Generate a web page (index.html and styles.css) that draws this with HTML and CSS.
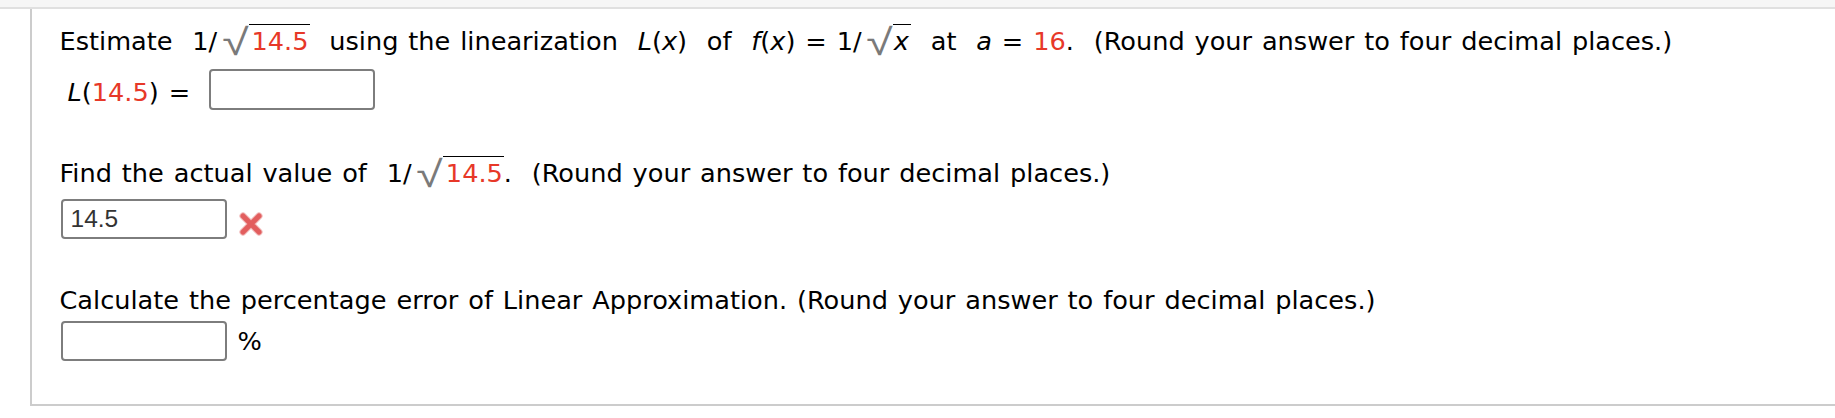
FILE: index.html
```html
<!DOCTYPE html>
<html>
<head>
<meta charset="utf-8">
<link rel="stylesheet" href="styles.css">
</head>
<body>
<div class="topbar"></div>
<div class="panel">
  <div class="part part1">
    <p class="line">Estimate&nbsp; 1/<span class="rad">√</span><span class="radicand red num">14.5</span>&nbsp; using the linearization&nbsp; <i>L</i>(<i>x</i>)&nbsp; of&nbsp; <i>f</i>(<i>x</i>) = 1/<span class="rad">√</span><span class="radicand var"><i>x</i></span>&nbsp; at&nbsp; <i>a</i> = <span class="red">16</span>.&nbsp; (Round your answer to four decimal places.)</p>
    <div class="row row1">
      <span class="label"><i>L</i>(<span class="red">14.5</span>) =</span>
      <input class="ans" type="text">
    </div>
  </div>
  <div class="part part2">
    <p class="line">Find the actual value of&nbsp; 1/<span class="rad">√</span><span class="radicand red num">14.5</span>.&nbsp; (Round your answer to four decimal places.)</p>
    <div class="row row2">
      <input class="ans" type="text" value="14.5">
      <svg class="wrong" width="26" height="26" viewBox="0 0 26 26" aria-label="incorrect">
        <path d="M5 5 L21 21 M21 5 L5 21" stroke="#f0b4b4" stroke-width="7" stroke-linecap="round" fill="none"/>
        <path d="M5 5 L21 21 M21 5 L5 21" stroke="#e25e5e" stroke-width="5" stroke-linecap="round" fill="none"/>
      </svg>
    </div>
  </div>
  <div class="part part3">
    <p class="line plain">Calculate the percentage error of Linear Approximation. (Round your answer to four decimal places.)</p>
    <div class="row row3">
      <input class="ans" type="text">
      <span class="unit">%</span>
    </div>
  </div>
</div>
</body>
</html>
```

FILE: styles.css
```css
html, body {
  margin: 0;
  padding: 0;
  background: #ffffff;
}

body {
  font-family: "DejaVu Sans", Verdana, sans-serif;
  font-size: 25.6px;
  color: #000;
}

.topbar {
  height: 7px;
  background: #f6f6f6;
  border-bottom: 2px solid #e0e0e0;
}

.panel {
  margin-left: 30px;
  height: 397px;
  box-sizing: border-box;
  border-left: 2px solid #cccccc;
  border-bottom: 2px solid #cccccc;
  padding: 15px 0 0 27.5px;
}

.line {
  margin: 0;
  line-height: 32px;
  white-space: nowrap;
  word-spacing: 1.75px;
}

i {
  font-style: oblique;
}

.red {
  color: #e73828;
}

.rad {
  display: inline-block;
  width: 25px;
  text-align: center;
  transform: scaleX(1.3);
  font-size: 37px;
  font-weight: 200;
  line-height: 0;
  color: #7a7a7a;
  vertical-align: -5px;
  margin-left: 5.5px;
  margin-right: 0.8px;
}

.radicand {
  display: inline-block;
  line-height: 32px;
  border-top: 1.5px solid #000;
}

.radicand.num {
  padding: 0 1px 0 3px;
}

.radicand.var {
  padding: 0 2px 0 1px;
}

.row {
  display: flex;
  align-items: center;
}

.row1 {
  margin-top: 11.5px;
}

.label {
  line-height: 32px;
  padding-top: 5px;
  margin-left: 8px;
  word-spacing: 1.75px;
}

.row1 .ans {
  margin-left: 19px;
  height: 41px;
}

.part2 {
  margin-top: 46px;
}

.row2 {
  margin-top: 10px;
}

.part3 {
  margin-top: 45px;
}

.row3 {
  margin-top: 5px;
}

.ans {
  box-sizing: border-box;
  width: 166px;
  height: 40px;
  margin: 0 0 0 1px;
  padding: 0 8px;
  border: 2px solid #7d7d7d;
  border-radius: 4px;
  background: #fff;
  font-family: "Liberation Sans", Arial, sans-serif;
  font-size: 24.5px;
  color: #333333;
  outline: none;
}

.wrong {
  margin-left: 11px;
  margin-top: 10px;
}

.unit {
  margin-left: 11px;
  line-height: 32px;
}
```
